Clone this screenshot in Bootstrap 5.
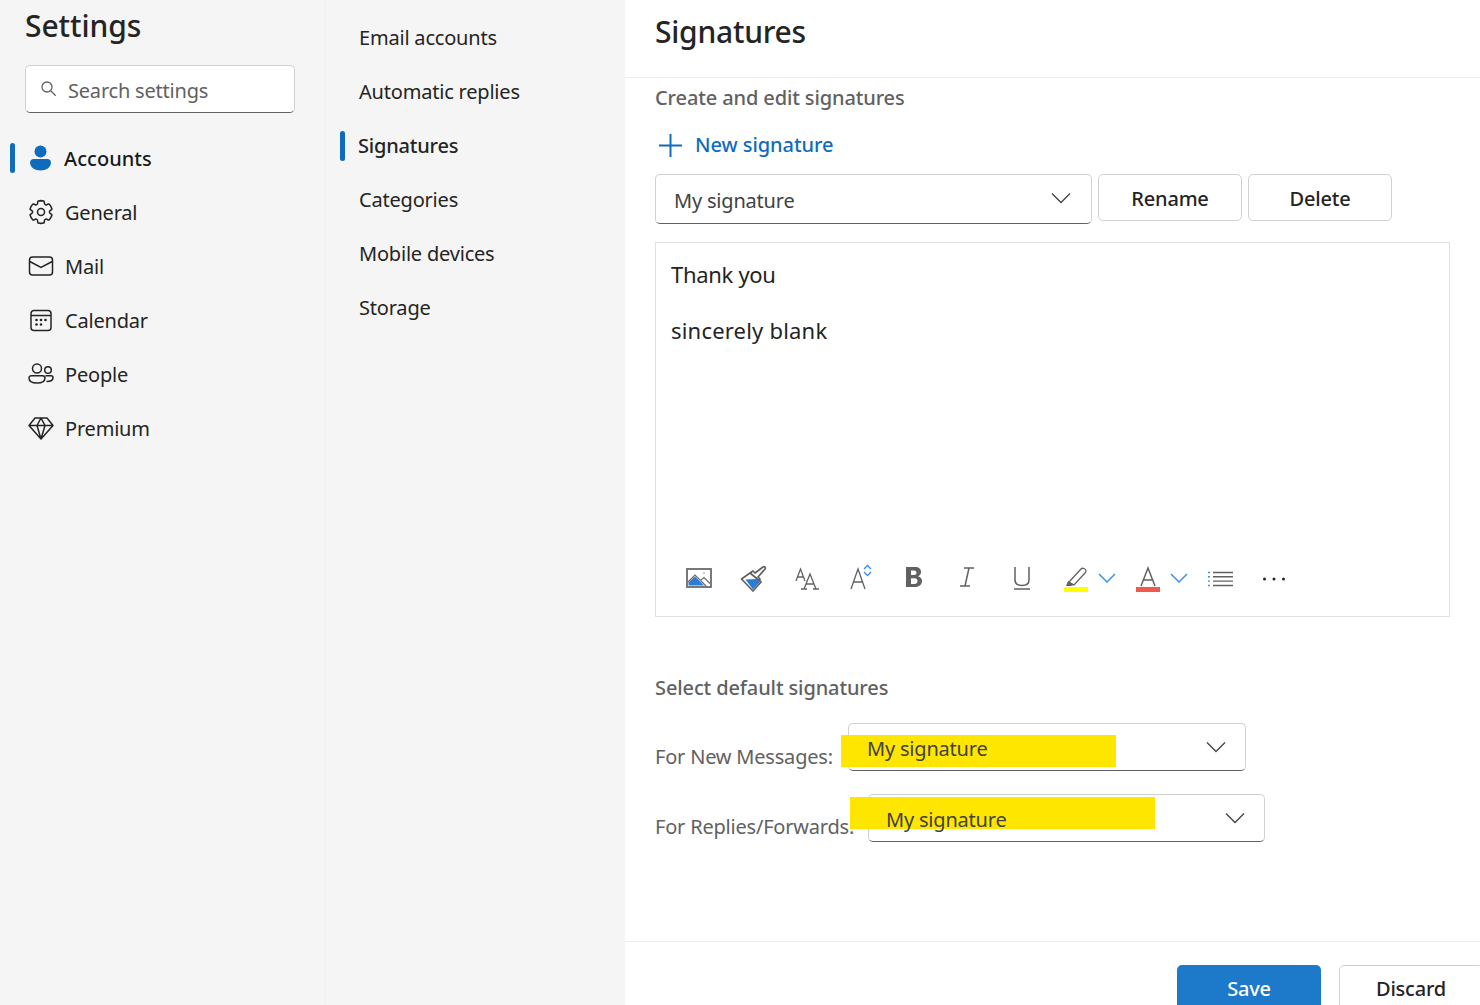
<!DOCTYPE html>
<html lang="en"><head><meta charset="utf-8"><title>Settings</title>
<link href="https://cdn.jsdelivr.net/npm/bootstrap@5.3.0/dist/css/bootstrap.min.css" rel="stylesheet">
<style>
html,body{height:1005px;overflow:hidden}
body{font-family:"Noto Sans","Open Sans","Liberation Sans",sans-serif;color:#242424;background:#fff;font-size:20px;letter-spacing:-.2px}
.shell{height:1005px;width:1480px}
.pane-a{width:326px;flex:none;background:#f5f5f5;border-right:1px solid #f0f0f0;padding:0 30px 0 25px}
.pane-b{width:299px;flex:none;background:#f5f5f5;padding-top:11px;padding-left:14px}
.pane-c{width:855px;flex:none;background:#fff}
.set-title{font-size:30px;font-weight:500;line-height:40px;margin:6px 0 19px;color:#242424;letter-spacing:-.05px}
.search-box{height:48px;background:#fff;border:1px solid #d1d1d1;border-bottom-color:#616161;border-radius:5px;padding-left:14px;gap:10px;color:#616161;margin-bottom:18px}
.search-box span{padding-top:4px}
.nav-one{height:54px;margin-left:-15px;padding-left:17px;gap:10px;position:relative;color:#242424}
.nav-one span{padding-top:2px}
.nav-one svg{width:28px;height:28px;flex:none}
.nav-one.on{font-weight:500;color:#1a1a1a;gap:9px;letter-spacing:.05px}
.nav-one.on::before{content:"";position:absolute;left:0;top:12px;width:5px;height:30px;border-radius:3px;background:#0f6cbd}
.sub-one{height:54px;padding-left:19px;position:relative}
.sub-one.on{font-weight:500;padding-left:18px}
.sub-one.on::before{content:"";position:absolute;left:0;top:12px;width:5px;height:30px;border-radius:3px;background:#0f6cbd}
.top-bar{height:78px;border-bottom:1px solid #eee;padding:0 30px}
.page-title{font-size:30px;font-weight:500;margin:0;line-height:40px;position:relative;top:-7px;letter-spacing:-.25px}
.body-area{padding:0 30px;height:858px}
.sec-head{font-size:20px;font-weight:500;color:#616161;line-height:30px;margin:0;letter-spacing:-.12px}
.top-head{margin-top:5px}
.new-link{height:46px;margin-top:9px;margin-left:3px;gap:12px;color:#0f6cbd;font-weight:500;letter-spacing:-.05px}
.pick{background:#fff;border:1px solid #d1d1d1;border-bottom-color:#616161;border-radius:5px;color:#424242;position:relative}
.pick-a{width:437px;height:50px;padding:0 20px 0 18px}
.pick-a span{padding-top:4px}
.pick-a svg{margin-top:-3px}
.pick-text{position:relative;z-index:2;padding-top:4px}
.ghost-btn{width:144px;height:47px;border:1px solid #d1d1d1;border-radius:5px;background:#fff;color:#242424;font-weight:500;font-size:20px;padding:2px 0 0;letter-spacing:-.2px}
.edit-row{gap:6px;align-items:flex-start;margin-top:6px}
.editor{width:795px;height:375px;border:1px solid #e0e0e0;margin-top:18px;padding:15px 15px 0;font-size:22px;letter-spacing:0;color:#242424;position:relative}
.editor p{margin:0;line-height:33px;height:56px}
.editor p.tight{letter-spacing:-.3px}
.editor p.loose{letter-spacing:.2px}
.tool-row{position:absolute;left:0;top:0}
.tool-row svg{position:absolute;top:0}
.def-head{margin-top:56px}
.def-row{color:#616161;position:relative}
.def-label{white-space:nowrap}
.def-label.nudge{margin-bottom:-1px}
.pick-b{width:398px;height:48px;padding:0 19px 0 18px}
.pick-b.narrow{width:397px;padding-left:17px}
.mark-y{position:absolute;background:#ffe600;z-index:1}
.foot-bar{height:64px;border-top:1px solid #eee;padding:23px 0 0 552px;gap:18px}
.btn-save,.btn-disc{width:144px;height:48px;border-radius:5px;font-weight:500;font-size:20px;padding:0;flex:none;letter-spacing:-.2px}
.btn-save{background:#1d79c9;color:#fff;border:0}
.btn-disc{background:#fff;border:1px solid #d1d1d1;color:#242424}
</style></head>
<body>
<div class="d-flex shell">
 <aside class="pane-a">
  <h1 class="set-title">Settings</h1>
  <div class="search-box d-flex align-items-center">
   <svg width="18" height="18" viewBox="0 0 18 18" fill="none" stroke="#616161" stroke-width="1.3"><circle cx="7" cy="7" r="5"/><path d="M10.7 10.7l5 5"/></svg>
   <span>Search settings</span>
  </div>
  <div class="nav-one on d-flex align-items-center">
   <svg viewBox="0 0 28 28" fill="#0f6cbd"><circle cx="13.5" cy="7.5" r="6"/><path d="M3 18.5c0-2 1.700-3.500 3.500-3.500h14c1.900 0 3.500 1.500 3.500 3.500 0 5-5 8-10.500 8S3 23.500 3 18.500z"/></svg>
   <span>Accounts</span></div>
  <div class="nav-one d-flex align-items-center">
   <svg viewBox="0 0 24 24" fill="none" stroke="#242424" stroke-width="1.300" stroke-linejoin="round"><path d="M12.012 2.250c.734.008 1.465.093 2.182.253a.75.75 0 0 1 .582.649l.17 1.527a1.384 1.384 0 0 0 1.927 1.116l1.401-.615a.75.75 0 0 1 .85.174 9.792 9.792 0 0 1 2.204 3.792.75.75 0 0 1-.271.825l-1.242.916a1.381 1.381 0 0 0 0 2.226l1.243.915a.75.75 0 0 1 .272.826 9.797 9.797 0 0 1-2.204 3.792.75.75 0 0 1-.848.175l-1.407-.617a1.380 1.380 0 0 0-1.926 1.114l-.169 1.526a.75.75 0 0 1-.572.647 9.518 9.518 0 0 1-4.406 0 .75.75 0 0 1-.572-.647l-.168-1.524a1.382 1.382 0 0 0-1.926-1.110l-1.406.616a.75.75 0 0 1-.849-.175 9.798 9.798 0 0 1-2.204-3.796.75.75 0 0 1 .272-.826l1.243-.916a1.380 1.380 0 0 0 0-2.226l-1.243-.914a.75.75 0 0 1-.271-.826 9.793 9.793 0 0 1 2.204-3.792.75.75 0 0 1 .85-.174l1.400.615a1.387 1.387 0 0 0 1.930-1.118l.17-1.526a.75.75 0 0 1 .583-.65c.717-.159 1.450-.243 2.201-.252z"/><circle cx="12" cy="12" r="3"/></svg>
   <span>General</span></div>
  <div class="nav-one d-flex align-items-center">
   <svg viewBox="0 0 28 28" fill="none" stroke="#242424" stroke-width="1.500"><rect x="2.500" y="5" width="23" height="18" rx="3"/><path d="M2.800 9.500L14 15.500l11.200-6"/></svg>
   <span>Mail</span></div>
  <div class="nav-one d-flex align-items-center">
   <svg viewBox="0 0 28 28" fill="none" stroke="#242424" stroke-width="1.500"><rect x="4" y="4.500" width="20" height="20" rx="3"/><path d="M4 9.500h20"/><g fill="#242424" stroke="none"><circle cx="9.500" cy="14" r="1.300"/><circle cx="14" cy="14" r="1.300"/><circle cx="18.500" cy="14" r="1.300"/><circle cx="9.500" cy="18.500" r="1.300"/><circle cx="14" cy="18.500" r="1.300"/></g></svg>
   <span>Calendar</span></div>
  <div class="nav-one d-flex align-items-center">
   <svg viewBox="0 0 28 28" fill="none" stroke="#242424" stroke-width="1.500"><circle cx="10" cy="8.500" r="4.500"/><circle cx="21" cy="10" r="3.300"/><path d="M2 18c0-1.500 1-2.300 2.500-2.300h11c1.500 0 2.500.8 2.500 2.300 0 3.500-4 5-8 5s-8-1.500-8-5z"/><path d="M18.500 15.700h5.500c1.300 0 2 .8 2 2 0 2.600-2.600 3.800-6.500 3.800"/></svg>
   <span>People</span></div>
  <div class="nav-one d-flex align-items-center">
   <svg viewBox="0 0 28 28" fill="none" stroke="#242424" stroke-width="1.500" stroke-linejoin="round"><path d="M8 4h12l6 7.500L14 25 2 11.500zM2 11.500h24M10 11.500L14 4l4 7.500L14 25z"/></svg>
   <span>Premium</span></div>
 </aside>
 <nav class="pane-b">
  <div class="sub-one d-flex align-items-center">Email accounts</div>
  <div class="sub-one d-flex align-items-center">Automatic replies</div>
  <div class="sub-one on d-flex align-items-center">Signatures</div>
  <div class="sub-one d-flex align-items-center">Categories</div>
  <div class="sub-one d-flex align-items-center">Mobile devices</div>
  <div class="sub-one d-flex align-items-center">Storage</div>
 </nav>
 <main class="pane-c">
  <div class="top-bar d-flex align-items-center"><h2 class="page-title">Signatures</h2></div>
  <div class="body-area">
   <h3 class="sec-head top-head">Create and edit signatures</h3>
   <div class="new-link d-flex align-items-center">
    <svg width="25" height="25" viewBox="0 0 25 25" stroke="#0f6cbd" stroke-width="2"><path d="M12.500 1v23M1 12.500h23"/></svg><span>New signature</span></div>
   <div class="edit-row d-flex">
    <div class="pick pick-a d-flex align-items-center justify-content-between"><span>My signature</span>
     <svg width="20" height="12" viewBox="0 0 20 12" fill="none" stroke="#424242" stroke-width="1.300"><path d="M1 1.500l9 9 9-9"/></svg></div>
    <button class="ghost-btn" type="button">Rename</button>
    <button class="ghost-btn" type="button">Delete</button>
   </div>
   <div class="editor">
    <p class="tight">Thank you</p><p class="loose">sincerely blank</p>
    <div class="tool-row">
     <svg style="left:30px;top:325px" width="26" height="20" viewBox="0 0 26 20"><rect x="1" y="1" width="24" height="18" fill="#fff" stroke="#6b6b6b" stroke-width="1.800"/><path d="M2.500 17.500v-3l6.500-6 9 9z" fill="#2b7cd3"/><path d="M2 14l7-7 11 11M15 12l3-2.500 6 6" fill="none" stroke="#6b6b6b" stroke-width="1.200"/><circle cx="18" cy="5" r=".8" fill="#888"/></svg>
     <svg style="left:84px;top:321px" width="28" height="28" viewBox="0 0 28 28" fill="none" stroke="#616161" stroke-width="1.700" stroke-linejoin="round"><path d="M10 9l3-2 2 2 8-6c1.500-1 3 .5 2 2l-7 8 2 2-1 3z" fill="#fff"/><path d="M1.500 15L10 9l11 9-8 9z" fill="#fff"/><path d="M5.500 15.500l11.500-.5 3 3-7 7.500z" fill="#2b7cd3" stroke="none"/></svg>
     <svg style="left:139px;top:324px" width="24" height="24" viewBox="0 0 24 24" fill="none" stroke="#616161" stroke-width="1.300"><path d="M1 14L5.500 2 10 14M2.500 10h6M9 22l6-15 6 15M6 22h6M18 22h6M11 17h8"/></svg>
     <svg style="left:193px;top:320px" width="26" height="28" viewBox="0 0 26 28" fill="none" stroke-width="1.300"><path d="M2 26L9 6l7 20M4.500 19h9" stroke="#616161"/><path d="M15 6l3.500-3.500L22 6M15 9l3.500 3.500L22 9" stroke="#3b8ee0"/></svg>
     <svg style="left:248px;top:323px" width="20" height="22" viewBox="0 0 20 22" fill="#616161"><path fill-rule="evenodd" d="M2 1h9c4 0 6 2 6 5 0 2-1 3.500-3 4.200 2.500.6 4 2.300 4 4.800 0 3.500-3 6-7 6H2zM7 4.500V9h3c1.500 0 2.500-1 2.500-2.300S11.500 4.500 10 4.500zM7 12.300V18h3.500c2 0 3-1.200 3-2.900s-1-2.800-3-2.800z"/></svg>
     <svg style="left:302px;top:323px" width="18" height="22" viewBox="0 0 18 22" fill="none" stroke="#616161" stroke-width="1.500"><path d="M6 2h10M2 20h10M11 2L7 20"/></svg>
     <svg style="left:356px;top:323px" width="20" height="24" viewBox="0 0 20 24" fill="none" stroke="#616161" stroke-width="1.500"><path d="M3 1v13c0 4 3 5.500 7 5.500s7-1.500 7-5.500V1M2 23h16"/></svg>
     <svg style="left:408px;top:323px" width="24" height="26" viewBox="0 0 24 26"><path d="M5 16L17 3c1.500-1.500 5-.5 5 2 0 1-.5 1.500-1 2L10 19z" fill="none" stroke="#616161" stroke-width="1.300"/><path d="M2 20l2-5 6 4-3 1z" fill="#616161"/><rect y="21" width="24" height="5" fill="#ffff00"/></svg>
     <svg style="left:442px;top:330px" width="18" height="11" viewBox="0 0 18 11" fill="none" stroke="#3b8ee0" stroke-width="1.500"><path d="M1 1l8 8 8-8"/></svg>
     <svg style="left:480px;top:323px" width="24" height="26" viewBox="0 0 24 26"><path d="M5 20L12 2l7 18M7 14h10" fill="none" stroke="#616161" stroke-width="1.500"/><rect y="21" width="24" height="5" fill="#ef5a50"/></svg>
     <svg style="left:514px;top:330px" width="18" height="11" viewBox="0 0 18 11" fill="none" stroke="#3b8ee0" stroke-width="1.500"><path d="M1 1l8 8 8-8"/></svg>
     <svg style="left:552px;top:328px" width="25" height="16" viewBox="0 0 25 16"><path d="M5 1.500h20M5 5.800h20M5 10.100h20M5 14.500h20" stroke="#616161" stroke-width="1.400"/><path d="M0 1.500h2M0 5.800h2M0 10.100h2M0 14.500h2" stroke="#3b8ee0" stroke-width="1.400"/></svg>
     <svg style="left:606px;top:333px" width="24" height="6" viewBox="0 0 24 6" fill="#242424"><circle cx="2.500" cy="3" r="1.500"/><circle cx="12" cy="3" r="1.500"/><circle cx="21.500" cy="3" r="1.500"/></svg>
    </div>
   </div>
   <h3 class="sec-head def-head">Select default signatures</h3>
   <div class="def-row d-flex align-items-end" style="margin-top:20px">
    <span class="def-label nudge" style="width:193px">For New Messages:</span>
    <span class="mark-y" style="left:186px;top:12px;width:275px;height:32px"></span>
    <div class="pick pick-b d-flex align-items-center justify-content-between"><span class="pick-text">My signature</span>
     <svg width="20" height="12" viewBox="0 0 20 12" fill="none" stroke="#424242" stroke-width="1.300"><path d="M1 1.500l9 9 9-9"/></svg></div>
   </div>
   <div class="def-row d-flex align-items-end" style="margin-top:23px">
    <span class="def-label" style="width:213px">For Replies/Forwards:</span>
    <span class="mark-y" style="left:195px;top:3px;width:305px;height:32px"></span>
    <div class="pick pick-b narrow d-flex align-items-center justify-content-between"><span class="pick-text">My signature</span>
     <svg width="20" height="12" viewBox="0 0 20 12" fill="none" stroke="#424242" stroke-width="1.300"><path d="M1 1.500l9 9 9-9"/></svg></div>
   </div>
  </div>
  <div class="foot-bar d-flex">
   <button class="btn-save" type="button">Save</button>
   <button class="btn-disc" type="button">Discard</button>
  </div>
 </main>
</div>
</body></html>
